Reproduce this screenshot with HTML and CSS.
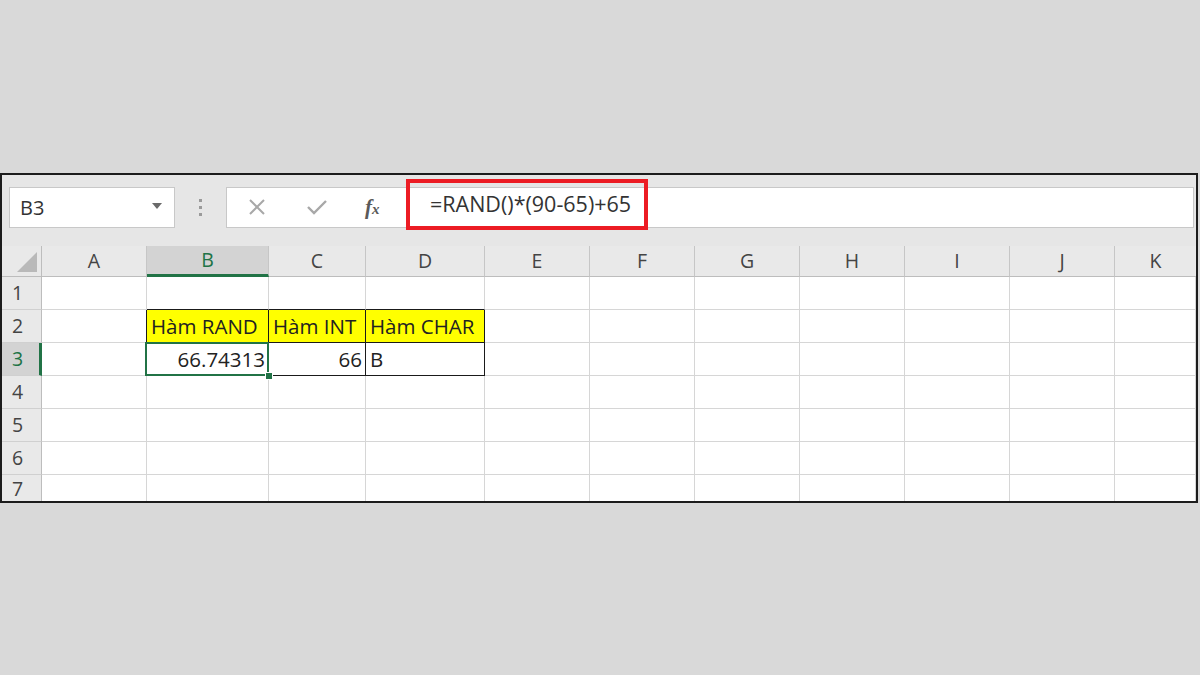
FILE: index.html
```html
<!DOCTYPE html>
<html lang="vi">
<head>
    <meta charset="UTF-8">
    <title>Excel - RAND</title>
    <link rel="stylesheet" href="styles.css">
</head>
<body>
    <div class="frame">
        <div class="toolbar">
            <div class="namebox">
                <span>B3</span>
                <span class="caret"></span>
            </div>
            <div class="dots"><i></i><i></i><i></i></div>
            <div class="formula">
                <div class="fx-tools">
                    <svg class="ico-x" width="18" height="18" viewBox="0 0 18 18"><path d="M2 2 L16 16 M16 2 L2 16" stroke="#a8a8a8" stroke-width="2" fill="none"/></svg>
                    <svg class="ico-ok" width="22" height="18" viewBox="0 0 22 18"><path d="M2 9 L8 15 L20 3" stroke="#a8a8a8" stroke-width="2.4" fill="none"/></svg>
                    <span class="fx"><i>f</i><em>x</em></span>
                </div>
                <div class="formula-text">=RAND()*(90-65)+65</div>
            </div>
        </div>

        <div class="sheet">
            <div class="hd corner"><span class="tri"></span></div>
            <div class="hd col">A</div>
            <div class="hd col sel">B</div>
            <div class="hd col">C</div>
            <div class="hd col">D</div>
            <div class="hd col">E</div>
            <div class="hd col">F</div>
            <div class="hd col">G</div>
            <div class="hd col">H</div>
            <div class="hd col">I</div>
            <div class="hd col">J</div>
            <div class="hd col last">K</div>

            <div class="hd row">1</div>
            <div class="c"></div><div class="c above"></div><div class="c above"></div><div class="c above"></div><div class="c"></div><div class="c"></div><div class="c"></div><div class="c"></div><div class="c"></div><div class="c"></div><div class="c"></div>

            <div class="hd row">2</div>
            <div class="c left-of"></div>
            <div class="c box yellow">Hàm RAND</div>
            <div class="c box yellow">Hàm INT</div>
            <div class="c box yellow">Hàm CHAR</div>
            <div class="c"></div><div class="c"></div><div class="c"></div><div class="c"></div><div class="c"></div><div class="c"></div><div class="c"></div>

            <div class="hd row sel">3</div>
            <div class="c left-of"></div>
            <div class="c box num active">66.74313<span class="handle"></span></div>
            <div class="c box num">66</div>
            <div class="c box">B</div>
            <div class="c"></div><div class="c"></div><div class="c"></div><div class="c"></div><div class="c"></div><div class="c"></div><div class="c"></div>

            <div class="hd row">4</div>
            <div class="c"></div><div class="c"></div><div class="c"></div><div class="c"></div><div class="c"></div><div class="c"></div><div class="c"></div><div class="c"></div><div class="c"></div><div class="c"></div><div class="c"></div>

            <div class="hd row">5</div>
            <div class="c"></div><div class="c"></div><div class="c"></div><div class="c"></div><div class="c"></div><div class="c"></div><div class="c"></div><div class="c"></div><div class="c"></div><div class="c"></div><div class="c"></div>

            <div class="hd row">6</div>
            <div class="c"></div><div class="c"></div><div class="c"></div><div class="c"></div><div class="c"></div><div class="c"></div><div class="c"></div><div class="c"></div><div class="c"></div><div class="c"></div><div class="c"></div>

            <div class="hd row r7">7</div>
            <div class="c"></div><div class="c"></div><div class="c"></div><div class="c"></div><div class="c"></div><div class="c"></div><div class="c"></div><div class="c"></div><div class="c"></div><div class="c"></div><div class="c"></div>
        </div>
    </div>
</body>
</html>
```

FILE: styles.css
```css
*{
    box-sizing: border-box;
}
html, body{
    margin: 0;
    height: 100%;
}
body{
    background-color: #d9d9d9;
    display: flex;
    align-items: center;
    font-family: "Open Sans", "Liberation Sans", sans-serif;
    color: #222;
}
.frame{
    width: 1198px;
    height: 330px;
    border: 2px solid #1c1c1c;
    background-color: #fff;
    overflow: hidden;
    display: flex;
    flex-direction: column;
}

/* toolbar */
.toolbar{
    height: 71px;
    flex-shrink: 0;
    background-color: #e6e6e6;
    display: flex;
    align-items: flex-start;
    padding: 12px 2px 0 7px;
}
.namebox{
    width: 166px;
    height: 41px;
    background-color: #fff;
    border: 1px solid #c8c8c8;
    display: flex;
    align-items: center;
    justify-content: space-between;
    padding: 0 12px 0 10px;
    font-size: 20px;
    color: #333;
}
.caret{
    width: 0;
    height: 0;
    border-left: 5px solid transparent;
    border-right: 5px solid transparent;
    border-top: 6px solid #6a6a6a;
    margin-top: -3px;
}
.dots{
    width: 51px;
    height: 41px;
    display: flex;
    flex-direction: column;
    align-items: center;
    justify-content: center;
    gap: 4px;
}
.dots i{
    width: 3px;
    height: 3px;
    background-color: #9a9a9a;
}
.formula{
    flex: 1;
    height: 41px;
    background-color: #fff;
    border: 1px solid #c8c8c8;
    display: flex;
    align-items: center;
    position: relative;
}
.fx-tools{
    width: 179px;
    display: flex;
    align-items: center;
    padding-left: 21px;
}
.ico-ok{
    margin-left: 40px;
}
.fx{
    margin-left: 37px;
    font-family: "Liberation Serif", serif;
    color: #5a5a5a;
    font-size: 21px;
    font-weight: bold;
}
.fx i{
    font-style: italic;
}
.fx em{
    font-size: 15px;
    font-style: italic;
}
.formula-text{
    position: absolute;
    left: 179px;
    top: -9px;
    width: 242px;
    height: 51px;
    border: 4px solid #ec1c24;
    padding: 6px 0 0 20px;
    font-size: 21.5px;
    color: #333;
}

/* grid */
.sheet{
    flex: 1;
    display: grid;
    grid-template-columns: 40px 105px 122px 97px 119px 105px 105px 105px 105px 105px 105px 1fr;
    grid-template-rows: 31px repeat(7, 33px);
    overflow: hidden;
}
.hd{
    background-color: #e9e9e9;
    color: #444;
    font-size: 19.5px;
    display: flex;
    align-items: center;
    justify-content: center;
}
.col{
    border-right: 1px solid #c6c6c6;
    border-bottom: 1px solid #bdbdbd;
}
.col.last{
    border-right: none;
}
.corner{
    border-right: 1px solid #bdbdbd;
    border-bottom: 1px solid #bdbdbd;
    position: relative;
}
.tri{
    position: absolute;
    right: 4px;
    bottom: 4px;
    width: 0;
    height: 0;
    border-left: 20px solid transparent;
    border-bottom: 20px solid #b9b9b9;
}
.row{
    border-right: 1px solid #bdbdbd;
    border-bottom: 1px solid #d0d0d0;
    justify-content: flex-start;
    padding-left: 10px;
}
.row.r7{
    align-items: flex-start;
    line-height: 1;
    padding-top: 4px;
}
.hd.sel{
    background-color: #d3d3d3;
    color: #217346;
}
.col.sel{
    border-bottom: 3px solid #217346;
}
.row.sel{
    border-right: 3px solid #217346;
}
.c{
    border-right: 1px solid #d6d6d6;
    border-bottom: 1px solid #d6d6d6;
    font-size: 20.5px;
    color: #222;
    display: flex;
    align-items: center;
    padding: 0 3px 0 4px;
    white-space: nowrap;
}
.c.above{
    border-bottom-color: #1a1a1a;
}
.c.left-of{
    border-right-color: #1a1a1a;
}
.c.box{
    border-right-color: #1a1a1a;
    border-bottom-color: #1a1a1a;
}
.yellow{
    background-color: #ffff00;
}
.num{
    justify-content: flex-end;
}
.active{
    position: relative;
}
.active::after{
    content: "";
    position: absolute;
    left: -2px;
    top: -1px;
    right: -1px;
    bottom: -1px;
    border: 2px solid #217346;
}
.handle{
    position: absolute;
    right: -5px;
    bottom: -5px;
    width: 8px;
    height: 8px;
    background-color: #217346;
    border: 1px solid #fff;
    z-index: 1;
}
```
